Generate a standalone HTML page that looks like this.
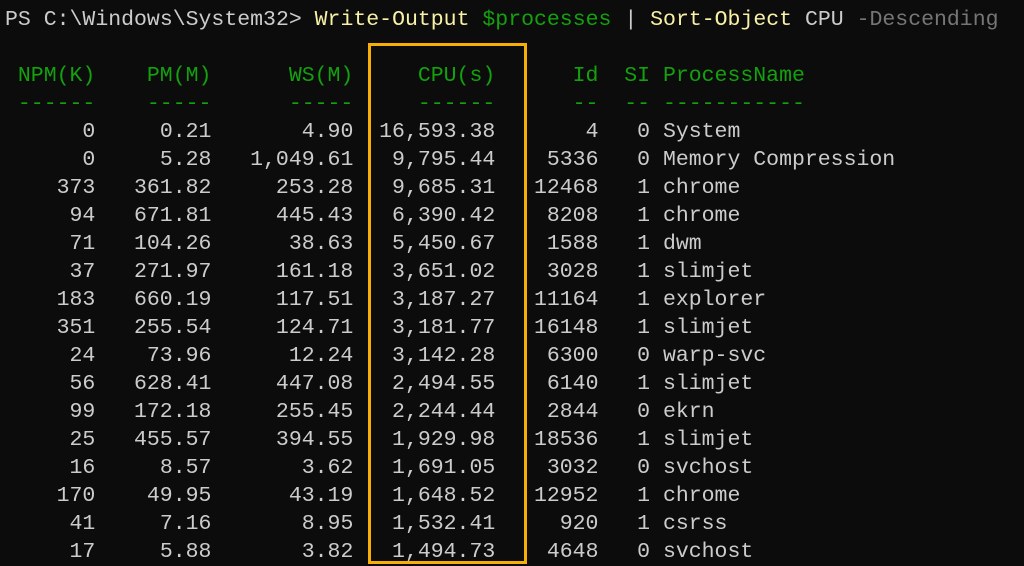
<!DOCTYPE html>
<html><head><meta charset="utf-8"><style>
html,body{margin:0;padding:0;background:#0c0c0c;width:1024px;height:566px;overflow:hidden}
#t{position:absolute;left:5px;top:6px;font-family:"Liberation Mono",monospace;font-size:21.5px;line-height:28px;color:#cccccc}
.r{height:28px;white-space:pre}
.r span{display:inline-block;text-align:right}
.a{width:7ch}.b{width:9ch}.c{width:11ch}.d{width:11ch}.e{width:8ch}.f{width:4ch}
.r span.n{text-align:left;padding-left:1ch}
.g{color:#13a10e}
.y{color:#f9f1a5}
.m{color:#767676}
#box{position:absolute;left:368px;top:43px;width:153px;height:515px;border:3px solid #f9ae06}
</style></head><body>
<div id="t"><div class="r">PS C:\Windows\System32&gt; <span class="y" style="display:inline;text-align:left">Write-Output</span> <span class="g" style="display:inline;text-align:left">$processes</span> | <span class="y" style="display:inline;text-align:left">Sort-Object</span> CPU <span class="m" style="display:inline;text-align:left">-Descending</span></div>
<div class="r"></div>
<div class="r g"><span class="a">NPM(K)</span><span class="b">PM(M)</span><span class="c">WS(M)</span><span class="d">CPU(s)</span><span class="e">Id</span><span class="f">SI</span><span class="n">ProcessName</span></div>
<div class="r g"><span class="a">------</span><span class="b">-----</span><span class="c">-----</span><span class="d">------</span><span class="e">--</span><span class="f">--</span><span class="n">-----------</span></div>
<div class="r"><span class="a">0</span><span class="b">0.21</span><span class="c">4.90</span><span class="d">16,593.38</span><span class="e">4</span><span class="f">0</span><span class="n">System</span></div>
<div class="r"><span class="a">0</span><span class="b">5.28</span><span class="c">1,049.61</span><span class="d">9,795.44</span><span class="e">5336</span><span class="f">0</span><span class="n">Memory Compression</span></div>
<div class="r"><span class="a">373</span><span class="b">361.82</span><span class="c">253.28</span><span class="d">9,685.31</span><span class="e">12468</span><span class="f">1</span><span class="n">chrome</span></div>
<div class="r"><span class="a">94</span><span class="b">671.81</span><span class="c">445.43</span><span class="d">6,390.42</span><span class="e">8208</span><span class="f">1</span><span class="n">chrome</span></div>
<div class="r"><span class="a">71</span><span class="b">104.26</span><span class="c">38.63</span><span class="d">5,450.67</span><span class="e">1588</span><span class="f">1</span><span class="n">dwm</span></div>
<div class="r"><span class="a">37</span><span class="b">271.97</span><span class="c">161.18</span><span class="d">3,651.02</span><span class="e">3028</span><span class="f">1</span><span class="n">slimjet</span></div>
<div class="r"><span class="a">183</span><span class="b">660.19</span><span class="c">117.51</span><span class="d">3,187.27</span><span class="e">11164</span><span class="f">1</span><span class="n">explorer</span></div>
<div class="r"><span class="a">351</span><span class="b">255.54</span><span class="c">124.71</span><span class="d">3,181.77</span><span class="e">16148</span><span class="f">1</span><span class="n">slimjet</span></div>
<div class="r"><span class="a">24</span><span class="b">73.96</span><span class="c">12.24</span><span class="d">3,142.28</span><span class="e">6300</span><span class="f">0</span><span class="n">warp-svc</span></div>
<div class="r"><span class="a">56</span><span class="b">628.41</span><span class="c">447.08</span><span class="d">2,494.55</span><span class="e">6140</span><span class="f">1</span><span class="n">slimjet</span></div>
<div class="r"><span class="a">99</span><span class="b">172.18</span><span class="c">255.45</span><span class="d">2,244.44</span><span class="e">2844</span><span class="f">0</span><span class="n">ekrn</span></div>
<div class="r"><span class="a">25</span><span class="b">455.57</span><span class="c">394.55</span><span class="d">1,929.98</span><span class="e">18536</span><span class="f">1</span><span class="n">slimjet</span></div>
<div class="r"><span class="a">16</span><span class="b">8.57</span><span class="c">3.62</span><span class="d">1,691.05</span><span class="e">3032</span><span class="f">0</span><span class="n">svchost</span></div>
<div class="r"><span class="a">170</span><span class="b">49.95</span><span class="c">43.19</span><span class="d">1,648.52</span><span class="e">12952</span><span class="f">1</span><span class="n">chrome</span></div>
<div class="r"><span class="a">41</span><span class="b">7.16</span><span class="c">8.95</span><span class="d">1,532.41</span><span class="e">920</span><span class="f">1</span><span class="n">csrss</span></div>
<div class="r"><span class="a">17</span><span class="b">5.88</span><span class="c">3.82</span><span class="d">1,494.73</span><span class="e">4648</span><span class="f">0</span><span class="n">svchost</span></div>
</div>
<div id="box"></div>
</body></html>
